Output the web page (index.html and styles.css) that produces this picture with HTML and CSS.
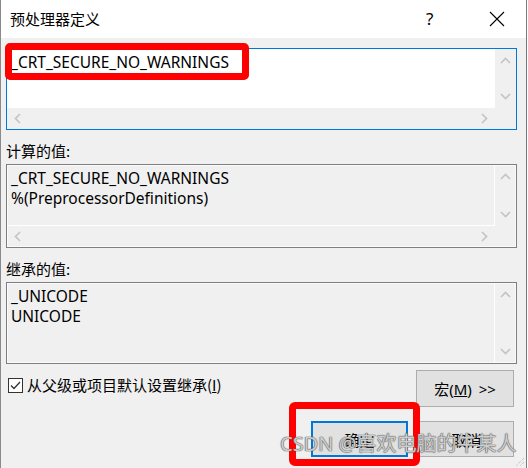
FILE: index.html
```html
<!DOCTYPE html>
<html lang="zh-CN">
<head>
<meta charset="utf-8">
<title>预处理器定义</title>
<link rel="stylesheet" href="styles.css">
</head>
<body>
<div class="window">
  <div class="titlebar">
    <span class="title">预处理器定义</span>
    <span class="help">?</span>
    <span class="close"><svg width="16" height="16" viewBox="0 0 16 16"><path d="M1 1L15 15M15 1L1 15" stroke="#000" stroke-width="1.1" fill="none"/></svg></span>
  </div>
  <div class="content">
    <div class="box box-edit">
      <div class="text">_CRT_SECURE_NO_WARNINGS</div>
      <div class="vscroll">
        <span class="arrow"><svg width="11" height="7" viewBox="0 0 11 7"><polyline points="1,6 5.5,1.5 10,6" fill="none" stroke="#c4c4c4" stroke-width="1.7"/></svg></span>
        <span class="arrow"><svg width="11" height="7" viewBox="0 0 11 7"><polyline points="1,1 5.5,5.5 10,1" fill="none" stroke="#c4c4c4" stroke-width="1.7"/></svg></span>
      </div>
      <div class="hscroll">
        <span class="harrow"><svg width="7" height="11" viewBox="0 0 7 11"><polyline points="6,1 1.5,5.5 6,10" fill="none" stroke="#c4c4c4" stroke-width="1.7"/></svg></span>
        <span class="harrow"><svg width="7" height="11" viewBox="0 0 7 11"><polyline points="1,1 5.5,5.5 1,10" fill="none" stroke="#c4c4c4" stroke-width="1.7"/></svg></span>
      </div>
      <div class="corner"></div>
    </div>

    <div class="label">计算的值:</div>
    <div class="box box-ro box-eval">
      <div class="text">_CRT_SECURE_NO_WARNINGS<br>%(PreprocessorDefinitions)</div>
      <div class="vscroll">
        <span class="arrow"><svg width="11" height="7" viewBox="0 0 11 7"><polyline points="1,6 5.5,1.5 10,6" fill="none" stroke="#c4c4c4" stroke-width="1.7"/></svg></span>
        <span class="arrow"><svg width="11" height="7" viewBox="0 0 11 7"><polyline points="1,1 5.5,5.5 10,1" fill="none" stroke="#c4c4c4" stroke-width="1.7"/></svg></span>
      </div>
      <div class="hscroll">
        <span class="harrow"><svg width="7" height="11" viewBox="0 0 7 11"><polyline points="6,1 1.5,5.5 6,10" fill="none" stroke="#c4c4c4" stroke-width="1.7"/></svg></span>
        <span class="harrow"><svg width="7" height="11" viewBox="0 0 7 11"><polyline points="1,1 5.5,5.5 1,10" fill="none" stroke="#c4c4c4" stroke-width="1.7"/></svg></span>
      </div>
      <div class="corner"></div>
    </div>

    <div class="label">继承的值:</div>
    <div class="box box-ro box-inherit">
      <div class="text">_UNICODE<br>UNICODE</div>
      <div class="vscroll">
        <span class="arrow"><svg width="11" height="7" viewBox="0 0 11 7"><polyline points="1,6 5.5,1.5 10,6" fill="none" stroke="#c4c4c4" stroke-width="1.7"/></svg></span>
        <span class="arrow"><svg width="11" height="7" viewBox="0 0 11 7"><polyline points="1,1 5.5,5.5 10,1" fill="none" stroke="#c4c4c4" stroke-width="1.7"/></svg></span>
      </div>
    </div>

    <div class="options-row">
      <label class="check">
        <span class="checkbox"><svg width="13" height="13" viewBox="0 0 13 13"><polyline points="2,6.5 5,9.5 11,3" fill="none" stroke="#333" stroke-width="1.3"/></svg></span>
        <span>从父级或项目默认设置继承(<u>I</u>)</span>
      </label>
      <button class="btn btn-macro">宏(<u>M</u>) &gt;&gt;</button>
    </div>

    <div class="buttons-row">
      <button class="btn btn-ok">确定</button>
      <button class="btn btn-cancel">取消</button>
    </div>
  </div>

  <div class="mark mark-edit"></div>
  <div class="mark mark-ok"></div>
  <div class="watermark">CSDN @喜欢电脑的牛某人</div>
  <svg class="grip" width="11" height="11" viewBox="0 0 11 11">
    <path d="M10 2L2 10M10 6L6 10M10 10L10 10" stroke="#b0b0b0" stroke-width="1" stroke-dasharray="1 1" fill="none"/>
  </svg>
</div>
</body>
</html>
```

FILE: styles.css
```css
* { box-sizing: border-box; }

html, body {
  margin: 0;
  padding: 0;
  background: #ffffff;
}

body {
  width: 528px;
  height: 468px;
  overflow: hidden;
  font-family: "Noto Sans", "Noto Sans CJK SC", sans-serif;
  font-size: 15px;
  color: #000;
}

.window {
  position: relative;
  width: 527px;
  height: 468px;
  border-left: 1px solid #8a8a8a;
  border-right: 1px solid #7a7a7a;
  background: #f0f0f0;
  display: flex;
  flex-direction: column;
}

.titlebar {
  height: 38px;
  background: #fff;
  display: flex;
  align-items: center;
  padding-left: 9px;
  flex: none;
}

.title {
  font-family: "Noto Sans CJK SC", sans-serif;
  font-size: 15px;
  flex: 1;
  margin-top: -1px;
}

.help {
  font-family: "Noto Sans", sans-serif;
  font-size: 17px;
  width: 16px;
  margin-right: 47px;
  margin-top: -1px;
}

.close {
  width: 16px;
  height: 16px;
  margin-right: 21px;
  margin-top: -1px;
  display: flex;
}

.content {
  flex: 1;
  padding: 10px 9px 0 5px;
  display: flex;
  flex-direction: column;
}

.box {
  display: grid;
  grid-template-columns: 1fr 21px;
  grid-template-rows: 1fr 21px;
  flex: none;
}

.box-edit {
  height: 82px;
  border: 1px solid #0078d7;
  background: #f0f0f0;
}

.box-edit .text {
  background: #fff;
}

.box-ro {
  border: 1px solid #7f7f7f;
  background: #f0f0f0;
  box-shadow: inset 0 0 0 1px #fafafa;
}

.box-eval { height: 84px; }

.box-eval .text {
  border-right: 1px solid #fff;
  border-bottom: 1px solid #fff;
}

.box-inherit {
  height: 82px;
  grid-template-rows: 1fr;
}

.box-inherit .text {
  border-right: 1px solid #fff;
}

.text {
  padding: 3px 0 0 4px;
  line-height: 20px;
  font-size: 15.5px;
  white-space: nowrap;
  overflow: hidden;
}

.vscroll {
  display: flex;
  flex-direction: column;
  justify-content: space-between;
  align-items: center;
  padding: 8px 0 8px;
}

.arrow {
  display: flex;
  height: 7px;
}

.hscroll {
  display: flex;
  justify-content: space-between;
  align-items: center;
  padding: 0 7px 0 7px;
}

.harrow {
  display: flex;
  width: 7px;
}

.label {
  margin: 11px 0 3px 0;
  line-height: 20px;
  height: 20px;
  font-size: 15px;
  font-family: "Noto Sans CJK SC", sans-serif;
}

.options-row {
  margin-top: 6px;
  display: flex;
  justify-content: space-between;
  align-items: flex-start;
  padding-right: 3px;
}

.check {
  display: flex;
  align-items: center;
  gap: 4px;
  margin-top: 6px;
  padding-left: 2px;
  font-family: "Noto Sans CJK SC", sans-serif;
  font-size: 15px;
  line-height: 18px;
}

.checkbox {
  width: 15px;
  height: 15px;
  border: 1px solid #333;
  background: #fff;
  display: flex;
  align-items: center;
  justify-content: center;
  flex: none;
}

.btn {
  font-family: "Noto Sans", "Noto Sans CJK SC", sans-serif;
  font-size: 15px;
  color: #000;
  background: #e1e1e1;
  border: 1px solid #adadad;
  padding: 0;
  margin: 0;
  cursor: default;
}

.btn-macro {
  width: 98px;
  height: 37px;
  word-spacing: 3px;
}

.buttons-row {
  margin-top: 14px;
  display: flex;
  justify-content: flex-end;
  gap: 11px;
  padding-right: 3px;
}

.btn-ok {
  width: 97px;
  height: 36px;
  border: 2px solid #0078d7;
}

.btn-cancel {
  width: 95px;
  height: 36px;
}

.mark {
  position: absolute;
  border: 7px solid #ff0000;
  border-radius: 5px;
  pointer-events: none;
}

.mark-edit {
  left: 4px;
  top: 43px;
  width: 244px;
  height: 37px;
}

.mark-ok {
  left: 288px;
  top: 402px;
  width: 131px;
  height: 64px;
  border-radius: 6px;
}

.watermark {
  position: absolute;
  left: 279px;
  top: 430px;
  font-family: "Noto Sans", "Noto Sans CJK SC", sans-serif;
  font-size: 20px;
  line-height: 28px;
  color: rgba(245, 245, 245, 0.75);
  text-shadow: 0 0 1px #555, 0 0 1px #555, 0 0 1px #777;
  white-space: nowrap;
  pointer-events: none;
}

.grip {
  position: absolute;
  right: 1px;
  bottom: 1px;
}
```
